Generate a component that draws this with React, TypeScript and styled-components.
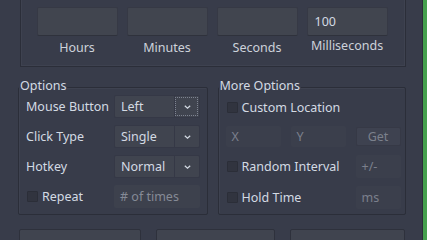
import { ReactNode } from 'react';
import styled, { createGlobalStyle } from 'styled-components';

const GlobalStyle = createGlobalStyle`
  html, body {
    margin: 0;
    padding: 0;
    overflow: hidden;
    background: #44a04c;
  }
  * {
    box-sizing: border-box;
  }
`;

const TIME_FIELDS = [
  { label: 'Hours', value: '' },
  { label: 'Minutes', value: '' },
  { label: 'Seconds', value: '' },
  { label: 'Milliseconds', value: '100' },
];

const Chevron = () => (
  <svg width="9" height="6" viewBox="0 0 9 6">
    <polyline points="1.8,1.8 4.5,4.3 7.2,1.8" fill="none" stroke="#d3dae3" strokeWidth="1.2" />
  </svg>
);

type SelectProps = {
  value: string;
  focused?: boolean;
};

const Select = ({ value, focused }: SelectProps) => (
  <SelectBox>
    <SelectValue>{value}</SelectValue>
    <SelectArrow focused={focused}>
      <Chevron />
    </SelectArrow>
  </SelectBox>
);

const CheckLabel = ({ children }: { children: ReactNode }) => (
  <CheckRow>
    <CheckBox />
    <span>{children}</span>
  </CheckRow>
);

export default function App() {
  return (
    <Screen>
      <GlobalStyle />
      <Window>
        <TimeGroup>
          {TIME_FIELDS.map((field) => (
            <TimeCell key={field.label}>
              <TimeInput>{field.value}</TimeInput>
              <TimeLabel raised={field.label === 'Milliseconds'}>{field.label}</TimeLabel>
            </TimeCell>
          ))}
        </TimeGroup>

        <GroupRow>
          <Group width={190}>
            <Legend>Options</Legend>
            <OptionsGrid>
              <RowLabel>Mouse Button</RowLabel>
              <Select value="Left" focused />
              <RowLabel>Click Type</RowLabel>
              <Select value="Single" />
              <RowLabel>Hotkey</RowLabel>
              <Select value="Normal" />
              <CheckLabel>Repeat</CheckLabel>
              <TextInput placeholderText>
                # of times
              </TextInput>
            </OptionsGrid>
          </Group>

          <Group width={189}>
            <Legend>More Options</Legend>
            <MoreGrid>
              <Span2>
                <CheckLabel>Custom Location</CheckLabel>
              </Span2>
              <Cell />
              <DimInput>X</DimInput>
              <DimInput>Y</DimInput>
              <DimButton>Get</DimButton>
              <Span2>
                <CheckLabel>Random Interval</CheckLabel>
              </Span2>
              <DimInput tall>+/-</DimInput>
              <Span2>
                <CheckLabel>Hold Time</CheckLabel>
              </Span2>
              <DimInput tall>ms</DimInput>
            </MoreGrid>
          </Group>
        </GroupRow>

        <ButtonRow>
          <ActionButton />
          <ActionButton />
          <ActionButton />
        </ButtonRow>
      </Window>
      <Desktop />
    </Screen>
  );
}

const Screen = styled.div`
  display: flex;
  width: 427px;
  height: 240px;
  overflow: hidden;
`;

const Window = styled.div`
  width: 423px;
  flex: none;
  padding: 0 16px 0 18px;
  background: #383c4a;
  border-right: 1px solid #2b2e39;
  color: #d3dae3;
  font-family: 'Noto Sans', 'Open Sans', sans-serif;
  font-size: 12.5px;
`;

const Desktop = styled.div`
  flex: 1;
  background: #44a04c;
`;

const TimeGroup = styled.div`
  display: grid;
  grid-template-columns: repeat(4, 80px);
  column-gap: 10px;
  margin-left: 2px;
  padding: 7px 16px 10px;
  border: 1px solid #2b2e39;
  border-top: none;
  box-shadow: inset 1px 0 0 #3e4250, inset -1px -1px 0 #3e4250;
`;

const TimeCell = styled.div`
  display: flex;
  flex-direction: column;
  align-items: center;
`;

const TimeInput = styled.div`
  width: 81px;
  height: 29px;
  padding: 0 7px;
  display: flex;
  align-items: center;
  background: #41454f;
  border: 1px solid #363945;
  border-bottom-color: #2f323c;
  border-radius: 2px;
  color: #d3dae3;
`;

const TimeLabel = styled.div<{ raised?: boolean }>`
  height: 20px;
  line-height: 16px;
  padding-top: ${({ raised }) => (raised ? '2px' : '4px')};
  color: #cdd2da;
`;

const GroupRow = styled.div`
  display: flex;
  gap: 10px;
  margin-top: 13px;
`;

const Group = styled.fieldset<{ width: number }>`
  width: ${({ width }) => width}px;
  margin: 0;
  padding: 0 0 5px;
  border: 1px solid #2b2e39;
  border-radius: 2px;
  box-shadow: inset 1px 1px 0 #3e4250;
  min-width: 0;
`;

const Legend = styled.legend`
  padding: 0 1px 3px;
  margin-left: 0;
  line-height: 12px;
  color: #d3dae3;
`;

const OptionsGrid = styled.div`
  display: grid;
  grid-template-columns: 88px 86px;
  grid-auto-rows: 23px;
  row-gap: 7px;
  padding-left: 7px;
  align-items: center;
`;

const MoreGrid = styled.div`
  display: grid;
  grid-template-columns: 55px 55px 45px;
  grid-template-rows: 23px 21px 23px 23px;
  column-gap: 10px;
  row-gap: 8px;
  padding-left: 7px;
  align-items: center;
  & > :first-child {
    margin-top: 2px;
  }
`;

const Span2 = styled.div`
  grid-column: span 2;
`;

const Cell = styled.div``;

const RowLabel = styled.div`
  color: #d3dae3;
`;

const SelectBox = styled.div`
  display: flex;
  height: 23px;
  background: #40444f;
  border: 1px solid #353846;
  border-radius: 2px;
`;

const SelectValue = styled.div`
  flex: 1;
  padding-left: 6px;
  display: flex;
  align-items: center;
`;

const SelectArrow = styled.div<{ focused?: boolean }>`
  width: 25px;
  display: flex;
  align-items: center;
  justify-content: center;
  border-left: 1px solid #353846;
  outline: ${({ focused }) => (focused ? '1px dotted #7e8391' : 'none')};
  outline-offset: -2px;
`;

const CheckRow = styled.label`
  display: flex;
  align-items: center;
  gap: 4px;
  margin-left: 1px;
  color: #d3dae3;
`;

const CheckBox = styled.span`
  width: 11px;
  height: 11px;
  flex: none;
  background: #31343f;
  border: 1px solid #2b2e38;
  border-radius: 1px;
`;

const TextInput = styled.div<{ placeholderText?: boolean }>`
  height: 23px;
  padding-left: 6px;
  display: flex;
  align-items: center;
  background: #3d414d;
  border-radius: 2px;
  color: ${({ placeholderText }) => (placeholderText ? '#858a96' : '#d3dae3')};
`;

const DimInput = styled.div<{ tall?: boolean }>`
  height: ${({ tall }) => (tall ? 23 : 21)}px;
  padding-left: 6px;
  display: flex;
  align-items: center;
  background: #3b3f4c;
  border-radius: 2px;
  color: #7b808c;
`;

const DimButton = styled.div`
  height: 19px;
  display: flex;
  align-items: center;
  justify-content: center;
  background: #3e4250;
  border: 1px solid #363946;
  border-radius: 2px;
  color: #7b808c;
`;

const ButtonRow = styled.div`
  display: grid;
  grid-template-columns: 122px 119px 115px;
  column-gap: 15px;
  margin-top: 14px;
  padding-left: 1px;
`;

const ActionButton = styled.div`
  height: 28px;
  background: #40444f;
  border: 1px solid #2e313c;
  border-radius: 2px;
`;
